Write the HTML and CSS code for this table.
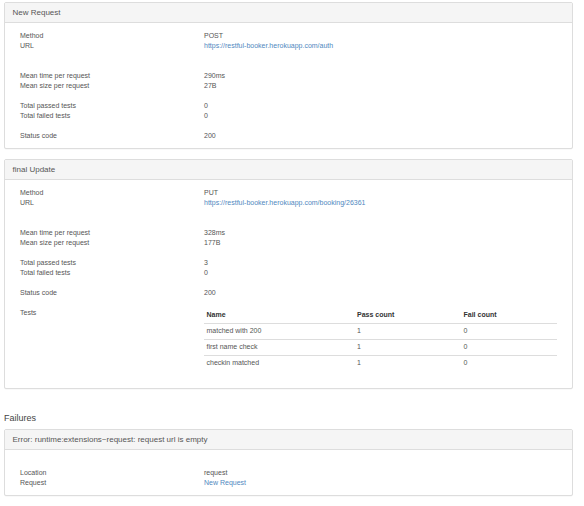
FILE: index.html
```html
<!DOCTYPE html>
<html>
<head>
<meta charset="utf-8">
<link rel="stylesheet" href="styles.css">
</head>
<body>
<div class="page">
  <div class="panel">
    <div class="panel-heading">New Request</div>
    <div class="panel-body">
      <div class="row"><div class="label">Method</div><div class="value">POST</div></div>
      <div class="row"><div class="label">URL</div><div class="value"><a class="link">https://restful-booker.herokuapp.com/auth</a></div></div>
      <div class="row gap2"><div class="label">Mean time per request</div><div class="value">290ms</div></div>
      <div class="row"><div class="label">Mean size per request</div><div class="value">27B</div></div>
      <div class="row gap1"><div class="label">Total passed tests</div><div class="value">0</div></div>
      <div class="row"><div class="label">Total failed tests</div><div class="value">0</div></div>
      <div class="row gap1"><div class="label">Status code</div><div class="value">200</div></div>
    </div>
  </div>

  <div class="panel">
    <div class="panel-heading">final Update</div>
    <div class="panel-body">
      <div class="row"><div class="label">Method</div><div class="value">PUT</div></div>
      <div class="row"><div class="label">URL</div><div class="value"><a class="link">https://restful-booker.herokuapp.com/booking/26361</a></div></div>
      <div class="row gap2"><div class="label">Mean time per request</div><div class="value">328ms</div></div>
      <div class="row"><div class="label">Mean size per request</div><div class="value">177B</div></div>
      <div class="row gap1"><div class="label">Total passed tests</div><div class="value">3</div></div>
      <div class="row"><div class="label">Total failed tests</div><div class="value">0</div></div>
      <div class="row gap1"><div class="label">Status code</div><div class="value">200</div></div>
      <div class="row gap1">
        <div class="label">Tests</div>
        <div class="value">
          <table class="tests">
            <thead>
              <tr><th class="c1">Name</th><th class="c2">Pass count</th><th class="c3">Fail count</th></tr>
            </thead>
            <tbody>
              <tr><td>matched with 200</td><td>1</td><td>0</td></tr>
              <tr><td>first name check</td><td>1</td><td>0</td></tr>
              <tr><td>checkin matched</td><td>1</td><td>0</td></tr>
            </tbody>
          </table>
        </div>
      </div>
    </div>
  </div>

  <h4 class="section-title">Failures</h4>
  <div class="panel">
    <div class="panel-heading">Error: runtime:extensions~request: request url is empty</div>
    <div class="panel-body">
      <div class="row gap1"><div class="label">Location</div><div class="value">request</div></div>
      <div class="row"><div class="label">Request</div><div class="value"><a class="link">New Request</a></div></div>
    </div>
  </div>
</div>
</body>
</html>
```

FILE: styles.css
```css
* { box-sizing: border-box; }
html, body {
  margin: 0;
  padding: 0;
  background: #fff;
}
body {
  font-family: "Liberation Sans", Arial, Helvetica, sans-serif;
  font-size: 7px;
  line-height: 10px;
  color: #555;
}
.page {
  width: 569px;
  margin: 2px 0 0 4px;
}
.panel {
  border: 1px solid #ddd;
  border-radius: 2px;
  background: #fff;
  margin-bottom: 10px;
  box-shadow: 0 0.5px 0.5px rgba(0,0,0,0.05);
}
.panel-heading {
  background: #f5f5f5;
  border-bottom: 1px solid #ddd;
  padding: 4.5px 7.5px;
  font-size: 8px;
  line-height: 10px;
  color: #555;
  border-radius: 2px 2px 0 0;
}
.panel-body {
  padding: 7.5px;
}
.row {
  display: grid;
  grid-template-columns: 1fr 2fr;
}
.row.gap1 { margin-top: 10px; }
.row.gap2 { margin-top: 20px; }
.label, .value {
  padding: 0 7.5px;
  min-width: 0;
}
.link {
  color: #5088c0;
  text-decoration: none;
}
.tests {
  width: 100%;
  border-collapse: collapse;
  border-spacing: 0;
  margin-bottom: 10px;
}
.tests th, .tests td {
  padding: 2.5px;
  text-align: left;
  line-height: 10px;
  vertical-align: top;
}
.tests th {
  font-weight: bold;
  color: #333;
  border-bottom: 1px solid #ddd;
}
.tests td {
  border-top: 1px solid #ddd;
}
.tests .c1 { width: 150.5px; }
.tests .c2 { width: 106.5px; }
.section-title {
  font-size: 9px;
  font-weight: 500;
  line-height: 11px;
  margin: 24px 0 5px 0;
  color: #444;
}
```
